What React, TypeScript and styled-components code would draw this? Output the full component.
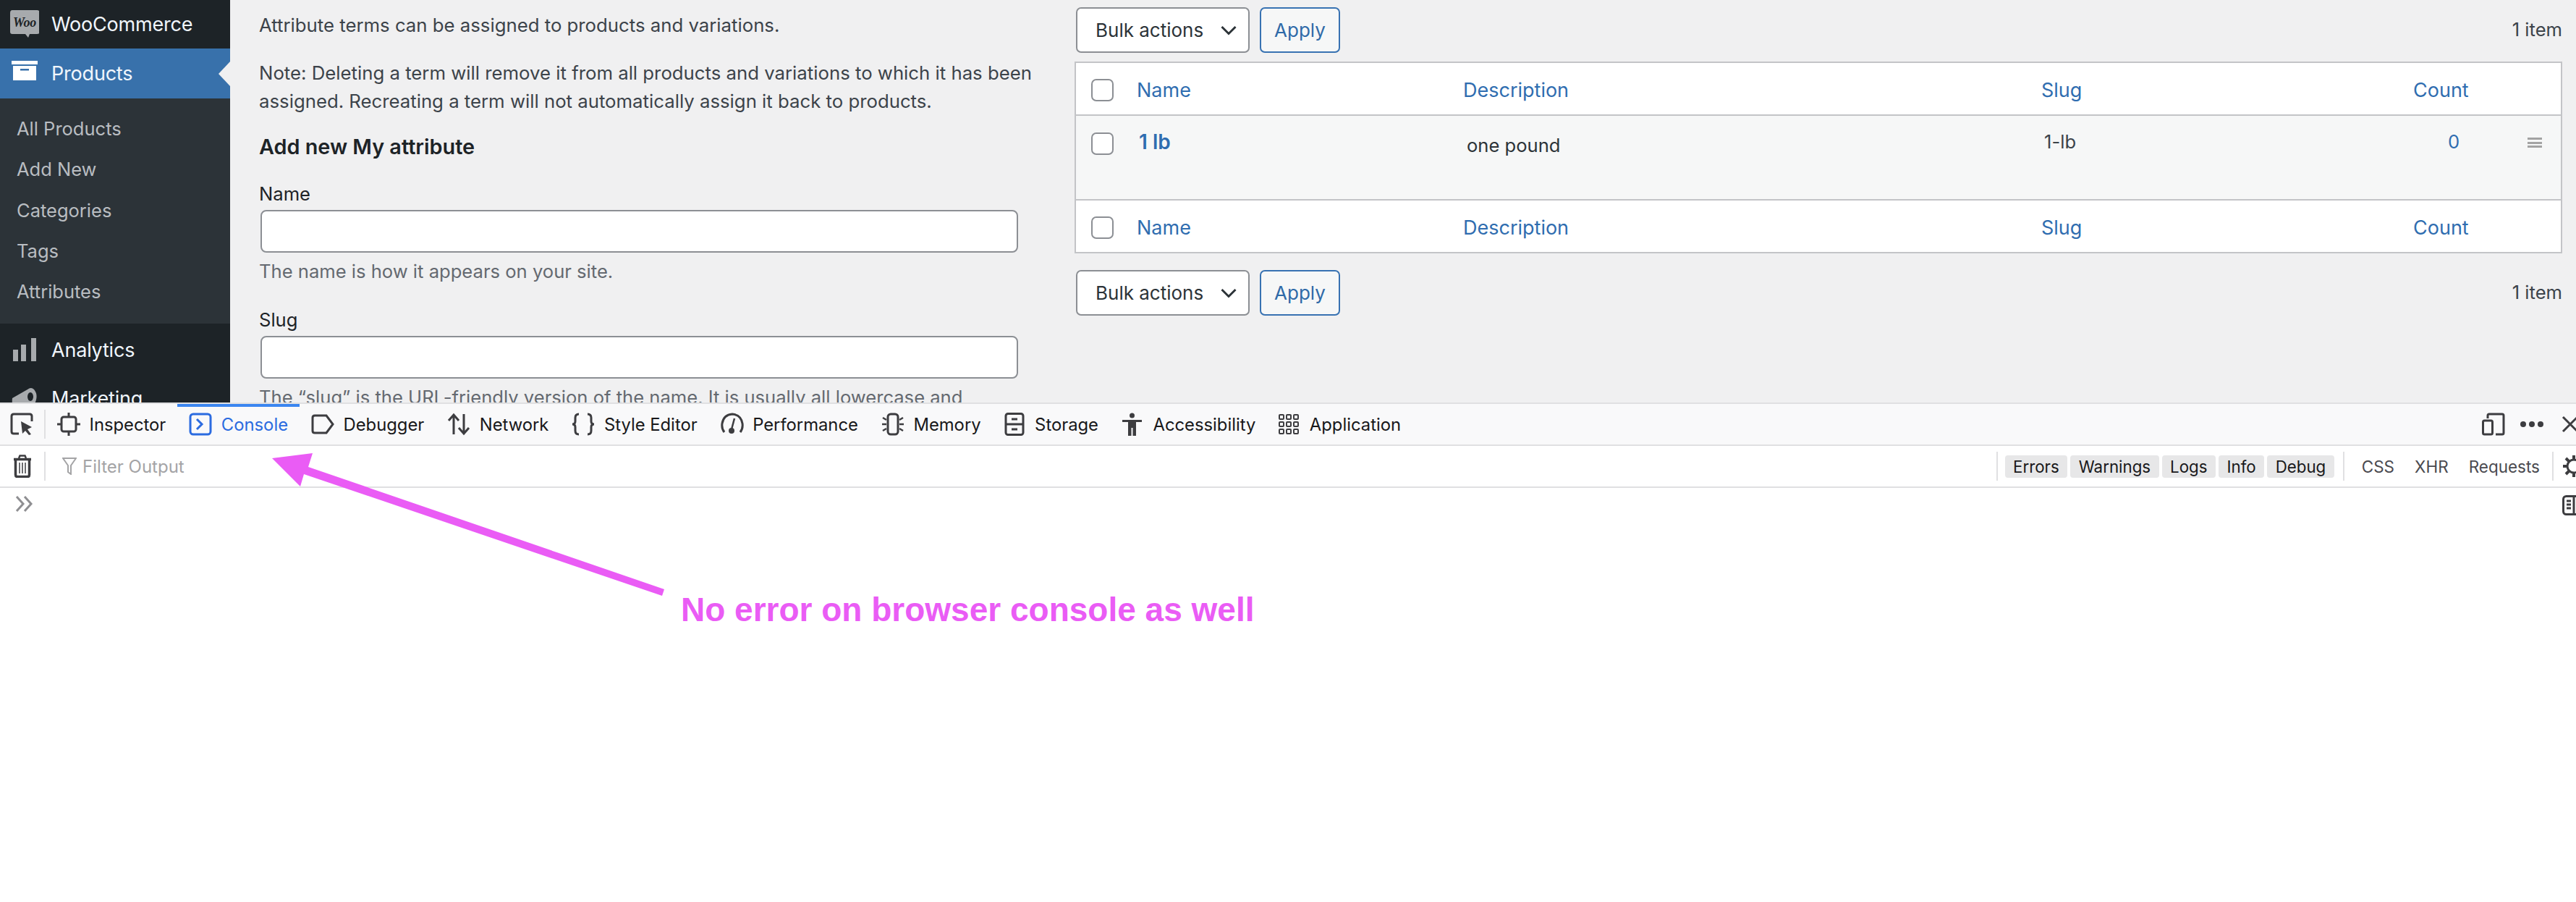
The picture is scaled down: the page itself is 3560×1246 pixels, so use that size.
import React from 'react';
import styled, { createGlobalStyle } from 'styled-components';

const GlobalStyle = createGlobalStyle`
  html, body {
    margin: 0;
    padding: 0;
    background: #fff;
    overflow: hidden;
  }
  body {
    width: 3560px;
    height: 1246px;
    font-family: Inter, "Liberation Sans", sans-serif;
  }
`;

const Page = styled.div`
  position: relative;
  width: 3560px;
  height: 1246px;
  overflow: hidden;
  background: #fff;
`;

/* ---------- WordPress admin ---------- */

const AdminPane = styled.div`
  display: flex;
  height: 556px;
  overflow: hidden;
  background: #f0f0f1;
`;

const Sidebar = styled.nav`
  flex: 0 0 318px;
  background: #1d2327;
  color: #f0f0f1;
`;

const MenuItem = styled.div<{ $active?: boolean; $height: number }>`
  position: relative;
  display: flex;
  align-items: center;
  height: ${({ $height }) => $height}px;
  padding-left: 14px;
  gap: 17px;
  font-size: 27px;
  letter-spacing: -0.2px;
  color: #f0f6fc;
  background: ${({ $active }) => ($active ? '#3871ab' : 'transparent')};

  ${({ $active }) =>
    $active &&
    `
    &::after {
      content: '';
      position: absolute;
      right: 0;
      top: 50%;
      margin-top: -17px;
      border: solid transparent;
      border-width: 17px 16px 17px 0;
      border-right-color: #f0f0f1;
    }
  `}
`;

const MenuIcon = styled.svg`
  flex: 0 0 40px;
  width: 40px;
  height: 40px;
`;

const SubMenu = styled.div`
  background: #2c3338;
  padding: 14px 0 16px 23px;
  height: 311px;
  box-sizing: border-box;
`;

const SubItem = styled.div`
  height: 56.3px;
  line-height: 56px;
  font-size: 25.5px;
  color: #b9bdc1;
`;

const Content = styled.main`
  flex: 1;
  display: flex;
  padding: 10px 19px 0 40px;
  color: #3c434a;
  font-size: 26px;
`;

const FormColumn = styled.section`
  flex: 0 0 1127px;
`;

const Paragraph = styled.p`
  margin: 0;
  width: 1090px;
  font-size: 25.76px;
  line-height: 39px;
  &:first-child {
    margin-top: 5px;
  }
  & + & {
    margin-top: 27px;
  }
`;

const Heading = styled.h2`
  margin: 26px 0 -2px;
  font-size: 28.8px;
  line-height: 36px;
  font-weight: 600;
  color: #1d2327;
`;

const FieldLabel = styled.label`
  display: block;
  margin-top: 31px;
  font-size: 25.6px;
  line-height: 36px;
  color: #1d2327;
`;

const TextInput = styled.input`
  display: block;
  box-sizing: border-box;
  width: 1047px;
  height: 59px;
  margin: 4px 0 0 2px;
  border: 2px solid #8c8f94;
  border-radius: 8px;
  background: #fff;
`;

const Hint = styled.p`
  margin: 8px 0 0;
  font-size: 25.6px;
  line-height: 36px;
  color: #646970;
`;

const TableColumn = styled.section`
  flex: 1;
  margin-top: 0;
`;

const ActionBar = styled.div`
  display: flex;
  align-items: center;
  gap: 14px;
  height: 63px;
  padding-left: 2px;
  color: #3c434a;
`;

const BulkSelect = styled.div`
  box-sizing: border-box;
  display: flex;
  align-items: center;
  justify-content: space-between;
  width: 240px;
  height: 63px;
  padding: 0 16px 0 25px;
  border: 2px solid #8c8f94;
  border-radius: 7px;
  background: #fff;
  font-size: 26px;
  color: #2c3338;
`;

const ApplyButton = styled.button`
  box-sizing: border-box;
  width: 111px;
  height: 63px;
  padding: 0;
  border: 2px solid #3872b2;
  border-radius: 7px;
  background: #f6f7f7;
  color: #2f6aa8;
  font-family: inherit;
  font-size: 26px;
`;

const ItemCount = styled.span`
  margin-left: auto;
  margin-top: -2px;
  font-size: 25.6px;
`;

const TermsTable = styled.div`
  margin: 12px 0 23px;
  border: 2px solid #c3c4c7;
  background: #fff;
`;

const TableRow = styled.div<{ $body?: boolean }>`
  display: grid;
  grid-template-columns: 84px 451px 799px 514px 158px 1fr;
  box-sizing: border-box;
  height: ${({ $body }) => ($body ? 119 : 71)}px;
  padding-top: ${({ $body }) => ($body ? 0 : 4)}px;
  align-items: ${({ $body }) => ($body ? 'start' : 'center')};
  background: ${({ $body }) => ($body ? '#f6f7f7' : '#fff')};
  ${({ $body }) =>
    $body &&
    `
    border-top: 2px solid #c3c4c7;
    border-bottom: 2px solid #c3c4c7;
  `}
`;

const CheckBox = styled.span<{ $body?: boolean }>`
  display: block;
  box-sizing: border-box;
  width: 31px;
  height: 31px;
  margin: ${({ $body }) => ($body ? '23px 0 0 21px' : '0 0 0 21px')};
  border: 2px solid #8c8f94;
  border-radius: 7px;
  background: #fff;
`;

const ColumnLink = styled.a`
  font-size: 27px;
  color: #2f6db0;
`;

const BodyCell = styled.div<{ $top: number; $left?: number; $color?: string }>`
  padding-top: ${({ $top }) => $top}px;
  padding-left: ${({ $left }) => $left ?? 0}px;
  font-size: 25.6px;
  line-height: 36px;
  color: ${({ $color }) => $color ?? '#3c434a'};
`;

const TermLink = styled.a`
  font-size: 28px;
  font-weight: 600;
  color: #2f6db0;
`;

const DragHandle = styled.span`
  display: block;
  width: 20px;
  height: 14px;
  margin-top: 30px;
  background: repeating-linear-gradient(#a3a3a3 0 3px, transparent 3px 5.5px);
`;

/* ---------- Firefox devtools ---------- */

const DevTools = styled.div`
  background: #fff;
  color: #0c0c0d;
`;

const ToolTabs = styled.div`
  display: flex;
  align-items: stretch;
  box-sizing: border-box;
  height: 60px;
  border-top: 2px solid #e0e0e2;
  border-bottom: 2px solid #e0e0e2;
  background: #f9f9fa;
`;

const PickerSlot = styled.div`
  flex: 0 0 63px;
  display: flex;
  align-items: center;
  padding-left: 14px;
  box-sizing: border-box;
  position: relative;
  &::after {
    content: '';
    position: absolute;
    right: 0;
    top: 8px;
    bottom: 8px;
    width: 2px;
    background: #e0e0e2;
  }
`;

const Tab = styled.div<{ $selected?: boolean }>`
  position: relative;
  display: flex;
  align-items: center;
  gap: 12.5px;
  padding: 0 16px;
  font-size: 23.8px;
  color: ${({ $selected }) => ($selected ? '#2b6be0' : '#18181a')};

  ${({ $selected }) =>
    $selected &&
    `
    &::before {
      content: '';
      position: absolute;
      left: 0;
      right: 0;
      top: 0;
      height: 4px;
      background: #3b86f0;
    }
  `}
`;

const ToolIcon = styled.svg<{ $w?: number }>`
  flex: 0 0 auto;
  width: ${({ $w }) => $w ?? 32}px;
  height: 32px;
  fill: none;
  stroke: currentColor;
  stroke-width: 3;
  color: #3d3d40;
`;

const ConsoleIcon = styled(ToolIcon)`
  color: #2b6be0;
`;

const ToolEnd = styled.div`
  margin-left: auto;
  display: flex;
  align-items: center;
  gap: 21px;
  margin-right: -8px;
`;

const FilterBar = styled.div`
  display: flex;
  align-items: center;
  box-sizing: border-box;
  height: 58px;
  border-bottom: 2px solid #e0e0e2;
`;

const TrashSlot = styled(PickerSlot)`
  padding-left: 18px;
  height: 100%;
`;

const FilterInput = styled.div`
  display: flex;
  align-items: center;
  gap: 8px;
  flex: 1;
  padding-left: 23px;
  font-size: 24px;
  color: #a4a4a6;
`;

const FilterDivider = styled.span`
  flex: 0 0 2px;
  height: 40px;
  background: #e0e0e2;
`;

const LevelGroup = styled.div`
  display: flex;
  gap: 4px;
  margin: 0 12px 0 10px;
`;

const LevelPill = styled.span`
  display: block;
  padding: 0 11.5px;
  height: 31px;
  line-height: 31px;
  border-radius: 4px;
  background: #e7e7e8;
  font-size: 22.3px;
  color: #18181a;
`;

const RequestGroup = styled.div`
  display: flex;
  gap: 28px;
  padding: 0 17px 0 24px;
  font-size: 22.5px;
  color: #4a4a4f;
`;

const GearSlot = styled.div`
  flex: 0 0 31px;
  min-width: 0;
  box-sizing: border-box;
  display: flex;
  padding-left: 12px;
`;

const ConsoleInput = styled.div`
  display: flex;
  justify-content: space-between;
  padding: 10px 0 0 21px;
`;

const PromptIcon = styled.svg`
  width: 26px;
  height: 24px;
  fill: none;
  stroke: #8f8f92;
  stroke-width: 3;
`;

const SideToggle = styled.svg`
  width: 32px;
  height: 28px;
  margin-right: -13px;
  fill: none;
  stroke: #3d3d40;
  stroke-width: 3;
`;

/* annotation laid over the screenshot */
const ArrowOverlay = styled.svg`
  position: absolute;
  left: 370px;
  top: 620px;
  width: 560px;
  height: 210px;
`;

const Annotation = styled.div`
  position: absolute;
  left: 941px;
  top: 815px;
  font-family: "Liberation Sans", Arial, sans-serif;
  font-size: 46px;
  line-height: 54px;
  font-weight: 700;
  color: #ea5cf5;
  white-space: nowrap;
`;

const subItems = ['All Products', 'Add New', 'Categories', 'Tags', 'Attributes'];

const HeaderCells = () => (
  <>
    <CheckBox />
    <ColumnLink>Name</ColumnLink>
    <ColumnLink>Description</ColumnLink>
    <ColumnLink>Slug</ColumnLink>
    <ColumnLink>Count</ColumnLink>
  </>
);

const Actions = () => (
  <ActionBar>
    <BulkSelect>
      Bulk actions
      <svg width="22" height="14" viewBox="0 0 22 14" fill="none" stroke="#2c3338" strokeWidth="3">
        <path d="M1.5 2 L11 11.5 L20.5 2" />
      </svg>
    </BulkSelect>
    <ApplyButton>Apply</ApplyButton>
    <ItemCount>1 item</ItemCount>
  </ActionBar>
);

const App = () => (
  <Page>
    <GlobalStyle />
    <AdminPane>
      <Sidebar>
        <MenuItem $height={67}>
          <MenuIcon viewBox="0 0 40 40">
            <path d="M3 0 H37 Q41 0 41 4 V30 Q41 33 37 33 H27 L25 38 L21 33 H3 Q0 33 0 30 V4 Q0 0 3 0 Z" fill="#a7aaad" />
            <text x="20" y="23" textAnchor="middle" fontSize="18" fontWeight="700" fontStyle="italic" fill="#1d2327" fontFamily="Liberation Serif, serif">Woo</text>
          </MenuIcon>
          WooCommerce
        </MenuItem>
        <MenuItem $active $height={69}>
          <MenuIcon viewBox="0 0 40 40">
            <path d="M2 2 H38 V7 H2 Z M4 9 H36 V29 H4 Z" fill="#fff" />
            <path d="M14 13 H26 V15.5 H14 Z" fill="#3871ab" />
          </MenuIcon>
          Products
        </MenuItem>
        <SubMenu>
          {subItems.map((item) => (
            <SubItem key={item}>{item}</SubItem>
          ))}
        </SubMenu>
        <MenuItem $height={72}>
          <MenuIcon viewBox="0 0 40 40">
            <path d="M4 20 H11 V36 H4 Z M15 13 H22 V36 H15 Z M29 4 H36 V36 H29 Z" fill="#a7aaad" />
          </MenuIcon>
          Analytics
        </MenuItem>
        <MenuItem $height={62}>
          <MenuIcon viewBox="0 0 40 40">
            <path d="M3 20 L24 8 Q29 4 33 8 Q38 14 36 22 Q34 31 27 30 L10 27 L9 34 H5 Q2 28 3 20 Z" fill="#a7aaad" />
            <ellipse cx="28" cy="18" rx="4" ry="6" fill="#1d2327" />
          </MenuIcon>
          Marketing
        </MenuItem>
      </Sidebar>
      <Content>
        <FormColumn>
          <Paragraph>Attribute terms can be assigned to products and variations.</Paragraph>
          <Paragraph>
            Note: Deleting a term will remove it from all products and variations to which it has been
            assigned. Recreating a term will not automatically assign it back to products.
          </Paragraph>
          <Heading>Add new My attribute</Heading>
          <FieldLabel>Name</FieldLabel>
          <TextInput />
          <Hint>The name is how it appears on your site.</Hint>
          <FieldLabel>Slug</FieldLabel>
          <TextInput />
          <Hint>The “slug” is the URL-friendly version of the name. It is usually all lowercase and</Hint>
        </FormColumn>
        <TableColumn>
          <Actions />
          <TermsTable>
            <TableRow>
              <HeaderCells />
            </TableRow>
            <TableRow $body>
              <CheckBox $body />
              <BodyCell $top={18} $left={3}>
                <TermLink>1 lb</TermLink>
              </BodyCell>
              <BodyCell $top={23} $left={5} $color="#2c3338">one pound</BodyCell>
              <BodyCell $top={18} $left={4}>1-lb</BodyCell>
              <BodyCell $top={18} $left={48} $color="#2f6db0">0</BodyCell>
              <DragHandle />
            </TableRow>
            <TableRow>
              <HeaderCells />
            </TableRow>
          </TermsTable>
          <Actions />
        </TableColumn>
      </Content>
    </AdminPane>

    <DevTools>
      <ToolTabs>
        <PickerSlot>
          <ToolIcon viewBox="0 0 32 32">
            <path d="M12 29 H5 Q2 29 2 26 V5 Q2 2 5 2 H27 Q30 2 30 5 V12" />
            <path d="M15 12 L30 20 L24 23 L29 30 L26 31 L21 25 L17 29 Z" fill="#3d3d40" stroke="none" />
          </ToolIcon>
        </PickerSlot>
        <Tab>
          <ToolIcon viewBox="0 0 32 32">
            <rect x="6" y="6" width="20" height="20" rx="3" />
            <path d="M16 0 V6 M16 26 V32 M0 16 H6 M26 16 H32" />
          </ToolIcon>
          Inspector
        </Tab>
        <Tab $selected>
          <ConsoleIcon viewBox="0 0 32 32">
            <rect x="2" y="2" width="28" height="28" rx="4" />
            <path d="M11 9 L18 16 L11 23" />
          </ConsoleIcon>
          Console
        </Tab>
        <Tab>
          <ToolIcon viewBox="0 0 32 32">
            <path d="M5 4 H21 L30 16 L21 28 H5 Q2 28 2 25 V7 Q2 4 5 4 Z" />
          </ToolIcon>
          Debugger
        </Tab>
        <Tab>
          <ToolIcon viewBox="0 0 32 32">
            <path d="M9 30 V4 M2 11 L9 3 L16 11 M23 2 V28 M16 21 L23 29 L30 21" />
          </ToolIcon>
          Network
        </Tab>
        <Tab>
          <ToolIcon viewBox="0 0 32 32">
            <path d="M10 2 Q5 2 5 7 V12 Q5 16 1 16 Q5 16 5 20 V25 Q5 30 10 30 M22 2 Q27 2 27 7 V12 Q27 16 31 16 Q27 16 27 20 V25 Q27 30 22 30" />
          </ToolIcon>
          Style Editor
        </Tab>
        <Tab>
          <ToolIcon viewBox="0 0 32 32">
            <path d="M5 27 Q1 22 2 15 Q4 3 16 2 Q28 3 30 15 Q31 22 27 27" />
            <path d="M19 8 L15 23" strokeWidth="2.5" />
            <circle cx="15" cy="25" r="4" fill="#3d3d40" stroke="none" />
          </ToolIcon>
          Performance
        </Tab>
        <Tab>
          <ToolIcon viewBox="0 0 32 32">
            <rect x="9" y="2" width="14" height="28" rx="4" />
            <path d="M2 7 L7 10 M1 16 H7 M2 25 L7 22 M30 7 L25 10 M31 16 H25 M30 25 L25 22" strokeWidth="2.5" />
          </ToolIcon>
          Memory
        </Tab>
        <Tab>
          <ToolIcon $w={30} viewBox="0 0 30 32">
            <rect x="2" y="1.5" width="24" height="29" rx="3" />
            <path d="M2 16 H26 M10 9 H18 M10 23 H18" />
          </ToolIcon>
          Storage
        </Tab>
        <Tab>
          <ToolIcon $w={31} viewBox="0 0 31 32">
            <circle cx="14.5" cy="4" r="3.5" fill="#3d3d40" stroke="none" />
            <path d="M1 10 H28 V13 H20 V32 H15.5 V21 H13.5 V32 H9 V13 H1 Z" fill="#3d3d40" stroke="none" />
          </ToolIcon>
          Accessibility
        </Tab>
        <Tab>
          <ToolIcon $w={30} viewBox="0 0 30 32">
            {[3, 13, 23].flatMap((y) =>
              [1, 11, 21].map((x) => <rect key={`${x}-${y}`} x={x} y={y} width="6" height="6" rx="1" strokeWidth="2" />)
            )}
          </ToolIcon>
          Application
        </Tab>
        <ToolEnd>
          <ToolIcon viewBox="0 0 32 32">
            <rect x="1.5" y="11" width="13" height="19" rx="2" />
            <path d="M8 8 V4 Q8 2 10 2 H28 Q30 2 30 4 V28 Q30 30 28 30 H19" />
          </ToolIcon>
          <ToolIcon viewBox="0 0 32 32">
            <circle cx="4" cy="16" r="4" fill="#3d3d40" stroke="none" />
            <circle cx="16" cy="16" r="4" fill="#3d3d40" stroke="none" />
            <circle cx="28" cy="16" r="4" fill="#3d3d40" stroke="none" />
          </ToolIcon>
          <ToolIcon viewBox="0 0 32 32">
            <path d="M6 6 L26 26 M26 6 L6 26" />
          </ToolIcon>
        </ToolEnd>
      </ToolTabs>

      <FilterBar>
        <TrashSlot>
          <ToolIcon $w={26} viewBox="0 0 26 32">
            <path d="M1 6.5 H25" strokeWidth="3.5" />
            <path d="M8 5 L9.5 1.5 H16.5 L18 5" strokeWidth="2.5" />
            <path d="M3.5 7 V28 Q3.5 30.5 6 30.5 H20 Q22.5 30.5 22.5 28 V7" strokeWidth="3.5" />
            <path d="M9 11 V26 M13 11 V26 M17 11 V26" strokeWidth="1.5" />
          </ToolIcon>
        </TrashSlot>
        <FilterInput>
          <svg width="20" height="24" viewBox="0 0 20 24" fill="none" stroke="#a4a4a6" strokeWidth="2">
            <path d="M1 1 H19 L12 11 V23 L8 20 V11 Z" />
          </svg>
          Filter Output
        </FilterInput>
        <FilterDivider />
        <LevelGroup>
          {['Errors', 'Warnings', 'Logs', 'Info', 'Debug'].map((level) => (
            <LevelPill key={level}>{level}</LevelPill>
          ))}
        </LevelGroup>
        <FilterDivider />
        <RequestGroup>
          <span>CSS</span>
          <span>XHR</span>
          <span>Requests</span>
        </RequestGroup>
        <FilterDivider />
        <GearSlot>
          <ToolIcon viewBox="0 0 32 32">
            <circle cx="16" cy="16" r="9" />
            <path d="M16 1 V7 M16 25 V31 M1 16 H7 M25 16 H31 M5 5 L9.5 9.5 M22.5 22.5 L27 27 M27 5 L22.5 9.5 M9.5 22.5 L5 27" strokeWidth="4" />
          </ToolIcon>
        </GearSlot>
      </FilterBar>

      <ConsoleInput>
        <PromptIcon viewBox="0 0 26 24">
          <path d="M2 2 L11 12 L2 22 M13 2 L22 12 L13 22" />
        </PromptIcon>
        <SideToggle viewBox="0 0 32 28">
          <rect x="1.5" y="1.5" width="29" height="25" rx="4" />
          <path d="M16 2 V26 M6 8 H12 M6 13 H12 M6 18 H12" />
        </SideToggle>
      </ConsoleInput>
    </DevTools>

    <ArrowOverlay viewBox="0 0 560 210">
      <path d="M6 13 L62 6 L56 25 L548 194 L545 203 L50 35 L45 52 Z" fill="#ea5cf5" />
    </ArrowOverlay>
    <Annotation>No error on browser console as well</Annotation>
  </Page>
);

export default App;
